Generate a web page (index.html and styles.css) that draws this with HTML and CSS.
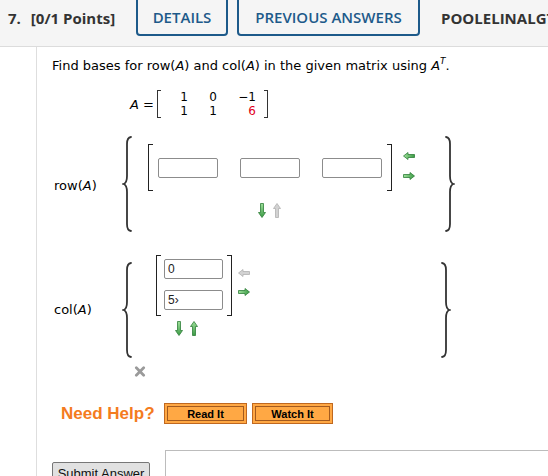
FILE: index.html
```html
<!DOCTYPE html>
<html>
<head>
<meta charset="utf-8">
<link rel="stylesheet" href="styles.css">
</head>
<body>
<svg class="defs" width="0" height="0" aria-hidden="true">
  <defs>
    <linearGradient id="gh" x1="0" y1="0" x2="1" y2="0">
      <stop offset="0" stop-color="#9ee09a"/>
      <stop offset="1" stop-color="#3b9a45"/>
    </linearGradient>
    <linearGradient id="gv" x1="0" y1="0" x2="0" y2="1">
      <stop offset="0" stop-color="#9ee09a"/>
      <stop offset="1" stop-color="#3b9a45"/>
    </linearGradient>
  </defs>
</svg>
<header class="top">
  <div class="qnum"><span class="num">7.</span><span>[0/1 Points]</span></div>
  <div class="tab tab-details">DETAILS</div>
  <div class="tab tab-prev">PREVIOUS ANSWERS</div>
  <div class="user">POOLELINALG7 5.3.013.</div>
</header>
<div class="main">
  <div class="gutter"></div>
  <div class="content">
    <p class="prompt">Find bases for row(<i>A</i>) and col(<i>A</i>) in the given matrix using <i>A</i><sup><i>T</i></sup>.</p>

    <div class="mat-def">
      <span class="lhs"><i>A</i> =</span>
      <div class="mat">
        <span class="mb mb-l"></span>
        <div class="mgrid">
          <span>1</span><span>0</span><span>&minus;1</span>
          <span>1</span><span>1</span><span class="red">6</span>
        </div>
        <span class="mb mb-r"></span>
      </div>
    </div>

    <div class="set set-row">
      <div class="label">row(<i>A</i>)</div>
      <svg class="brace" width="10" height="96" viewBox="0 0 10 96"><path d="M9 1 Q5 1.5 5 8 L5 40 Q5 47 1.5 48 Q5 49 5 56 L5 88 Q5 94.5 9 95" fill="none" stroke="#333" stroke-width="1.8" stroke-linecap="round"/></svg>
      <div class="inner inner-row">
        <div class="mline">
          <span class="bk bk-l row-bk"></span>
          <input class="inp first" type="text" value="">
          <input class="inp" type="text" value="">
          <input class="inp" type="text" value="">
          <span class="bk bk-r row-bk"></span>
          <div class="harrows row-harrows">
            <svg class="arr" width="12" height="8" viewBox="0 0 12 8"><path d="M11.5 2.5 H5 V0.5 L0.5 4 L5 7.5 V5.5 H11.5 Z" fill="url(#gh)" stroke="#2f7f38" stroke-width="0.8"/></svg>
            <svg class="arr" width="12" height="8" viewBox="0 0 12 8"><path d="M0.5 2.5 H7 V0.5 L11.5 4 L7 7.5 V5.5 H0.5 Z" fill="url(#gh)" stroke="#2f7f38" stroke-width="0.8"/></svg>
          </div>
        </div>
        <div class="varrows row-varrows">
          <svg class="arr" width="8" height="15" viewBox="0 0 8 15"><path d="M2.5 0.5 H5.5 V9.5 H7.5 L4 14.5 L0.5 9.5 H2.5 Z" fill="url(#gv)" stroke="#2f7f38" stroke-width="0.8"/></svg>
          <svg class="arr" width="8" height="15" viewBox="0 0 8 15"><path d="M2.5 14.5 H5.5 V5.5 H7.5 L4 0.5 L0.5 5.5 H2.5 Z" fill="#d2d2d2" stroke="#b0b0b0" stroke-width="0.8"/></svg>
        </div>
      </div>
      <svg class="brace brace-r" width="10" height="96" viewBox="0 0 10 96"><path d="M1 1 Q5 1.5 5 8 L5 40 Q5 47 8.5 48 Q5 49 5 56 L5 88 Q5 94.5 1 95" fill="none" stroke="#333" stroke-width="1.8" stroke-linecap="round"/></svg>
    </div>

    <div class="set set-col">
      <div class="label label-col">col(<i>A</i>)</div>
      <svg class="brace brace-col" width="10" height="96" viewBox="0 0 10 96"><path d="M9 1 Q5 1.5 5 8 L5 40 Q5 47 1.5 48 Q5 49 5 56 L5 88 Q5 94.5 9 95" fill="none" stroke="#333" stroke-width="1.8" stroke-linecap="round"/></svg>
      <div class="inner inner-col">
        <div class="mline">
          <span class="bk bk-l col-bk"></span>
          <div class="cstack">
            <input class="inp cinp" type="text" value="0">
            <input class="inp cinp" type="text" value="5›">
          </div>
          <span class="bk bk-r col-bk"></span>
          <div class="harrows col-harrows">
            <svg class="arr" width="12" height="8" viewBox="0 0 12 8"><path d="M11.5 2.5 H5 V0.5 L0.5 4 L5 7.5 V5.5 H11.5 Z" fill="#d2d2d2" stroke="#b0b0b0" stroke-width="0.8"/></svg>
            <svg class="arr" width="12" height="8" viewBox="0 0 12 8"><path d="M0.5 2.5 H7 V0.5 L11.5 4 L7 7.5 V5.5 H0.5 Z" fill="url(#gh)" stroke="#2f7f38" stroke-width="0.8"/></svg>
          </div>
        </div>
        <div class="varrows col-varrows">
          <svg class="arr" width="8" height="15" viewBox="0 0 8 15"><path d="M2.5 0.5 H5.5 V9.5 H7.5 L4 14.5 L0.5 9.5 H2.5 Z" fill="url(#gv)" stroke="#2f7f38" stroke-width="0.8"/></svg>
          <svg class="arr" width="8" height="15" viewBox="0 0 8 15"><path d="M2.5 14.5 H5.5 V5.5 H7.5 L4 0.5 L0.5 5.5 H2.5 Z" fill="url(#gv)" stroke="#2f7f38" stroke-width="0.8"/></svg>
        </div>
      </div>
      <svg class="brace brace-r brace-col" width="10" height="96" viewBox="0 0 10 96"><path d="M1 1 Q5 1.5 5 8 L5 40 Q5 47 8.5 48 Q5 49 5 56 L5 88 Q5 94.5 1 95" fill="none" stroke="#333" stroke-width="1.8" stroke-linecap="round"/></svg>
    </div>

    <svg class="xmark" width="12" height="12" viewBox="0 0 12 12"><path d="M2 2 L10 10 M10 2 L2 10" stroke="#9a9a9a" stroke-width="3" stroke-linecap="round"/></svg>

    <div class="help">
      <span class="help-text">Need Help?</span>
      <button class="hbtn hbtn-read" type="button"><span>Read It</span></button>
      <button class="hbtn hbtn-watch" type="button"><span>Watch It</span></button>
    </div>

    <div class="bottom">
      <button class="submit" type="button">Submit Answer</button>
      <div class="notes"></div>
    </div>
  </div>
</div>
</body>
</html>
```
FILE: styles.css
```css
* { box-sizing: border-box; }
html, body { margin: 0; padding: 0; }
body {
  width: 548px;
  height: 476px;
  overflow: hidden;
  background: #fff;
  color: #000;
  font-family: "DejaVu Sans", Verdana, sans-serif;
}
.defs { position: absolute; width: 0; height: 0; }

.top {
  height: 47px;
  background: #f5f5f5;
  border-bottom: 1px solid #dcdcdc;
  display: flex;
  align-items: flex-start;
  font-family: "Open Sans", sans-serif;
  font-size: 15px;
  white-space: nowrap;
  overflow: hidden;
}
.top > * { flex: none; }
.qnum {
  width: 136px;
  height: 36px;
  padding-left: 8px;
  display: flex;
  align-items: center;
  font-weight: 700;
  color: #333;
}
.qnum .num { margin-right: 10px; }
.tab {
  height: 38px;
  margin-top: -2px;
  border: 2px solid #1d5a8a;
  border-radius: 0 0 4px 4px;
  display: flex;
  align-items: center;
  justify-content: center;
  color: #1d5a8a;
  font-weight: 600;
}
.tab-details { width: 92px; }
.tab-prev { width: 183px; margin-left: 9px; }
.user {
  height: 36px;
  margin-left: 21px;
  display: flex;
  align-items: center;
  font-weight: 700;
  color: #333;
}

.main { display: flex; height: 429px; }
.gutter { width: 37px; flex: none; border-right: 1px solid #dedede; }
.content { flex: 1; padding-left: 15px; }

.prompt {
  margin: 11px 0 0;
  font-size: 13px;
  line-height: 16px;
  white-space: nowrap;
}
.prompt sup { font-size: 9px; line-height: 0; vertical-align: 6px; }

.mat-def {
  margin-top: 16px;
  height: 28px;
  padding-left: 78px;
  display: flex;
  align-items: center;
  font-size: 13px;
}
.lhs { margin-right: 3px; }
.mat { display: flex; height: 28px; }
.mb { width: 4px; height: 28px; border: 1px solid #333; }
.mb-l { border-right: none; }
.mb-r { border-left: none; }
.mgrid {
  display: grid;
  grid-template-columns: 27px 29px 39px;
  padding-right: 8px;
  font-size: 12px;
  line-height: 14px;
  text-align: right;
}
.red { color: #e0001b; }

.set { display: flex; align-items: flex-start; }
.set-row { margin-top: 18px; height: 96px; }
.set-col { margin-top: 23px; height: 101px; }
.label {
  width: 70px;
  padding-left: 2px;
  font-size: 13px;
  line-height: 16px;
  align-self: center;
  flex: none;
}
.set-row .label { margin-top: 4px; }
.label-col { align-self: flex-start; margin-top: 47px; }
.brace { display: block; flex: none; }
.brace-col { margin-top: 7px; }

.inner { flex: none; }
.inner-row { width: 313px; padding: 8px 0 0 16px; }
.inner-col { width: 309px; padding: 0 0 0 24px; }

.mline { display: flex; align-items: center; }
.bk { display: block; width: 5px; border: 1.5px solid #222; flex: none; }
.bk-l { border-right: none; }
.bk-r { border-left: none; }
.row-bk { height: 47px; }
.col-bk { height: 61px; }

.inp {
  display: block;
  width: 60px;
  height: 20px;
  margin: 0 0 0 22px;
  padding: 0 3px;
  border: 1px solid #8c8c8c;
  border-radius: 2px;
  background: #fff;
  font-family: "Liberation Sans", Arial, sans-serif;
  font-size: 12px;
  color: #222;
  outline: none;
  flex: none;
}
.inp.first { margin-left: 5px; }
.row-bk.bk-r { margin-left: 5px; }

.cstack {
  display: flex;
  flex-direction: column;
  gap: 11px;
  align-self: flex-start;
  padding-top: 4px;
  margin-left: 3px;
}
.cinp { width: 59px; margin: 0; }
.col-bk.bk-r { margin-left: 4px; }

.harrows { display: flex; flex-direction: column; }
.arr { display: block; }
.row-harrows { margin-left: 11px; gap: 12px; margin-top: -3px; }
.col-harrows { margin-left: 6px; gap: 11px; align-self: flex-start; margin-top: 14px; }

.varrows { display: flex; gap: 7px; }
.row-varrows { margin-top: 12px; margin-left: 110px; }
.col-varrows { margin-top: 5px; margin-left: 19px; }

.xmark { display: block; margin: 10px 0 0 82px; width: 12px; height: 11px; }

.help {
  margin-top: 26px;
  height: 21px;
  display: flex;
  align-items: center;
}
.help-text {
  margin-left: 9px;
  width: 103px;
  font-family: "Liberation Sans", Arial, sans-serif;
  font-weight: 700;
  font-size: 17px;
  color: #f47b20;
  white-space: nowrap;
}
.hbtn {
  height: 21px;
  padding: 2px;
  border: 1px solid #c0681f;
  background: #ffa844;
  font-family: "Liberation Sans", Arial, sans-serif;
  font-weight: 700;
  font-size: 11px;
  color: #000;
  display: flex;
  flex: none;
}
.hbtn span {
  flex: 1;
  display: flex;
  align-items: center;
  justify-content: center;
  border: 1px solid #a35a1e;
}
.hbtn-read { width: 83px; }
.hbtn-watch { width: 81px; margin-left: 5px; }

.bottom { margin-top: 26px; display: flex; align-items: flex-start; }
.submit {
  margin-top: 12px;
  width: 98px;
  height: 22px;
  padding: 0;
  border: 1px solid #777;
  border-radius: 2px;
  background: #e1e1e1;
  font-family: "Liberation Sans", Arial, sans-serif;
  font-size: 13px;
  color: #111;
  flex: none;
}
.notes {
  margin-left: 15px;
  flex: 1;
  height: 40px;
  border-top: 1px solid #bcbcbc;
  border-left: 1px solid #bcbcbc;
}
```
